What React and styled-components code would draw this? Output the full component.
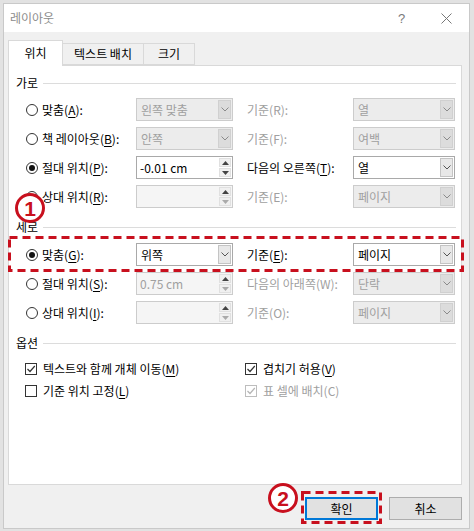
import React from "react";
import styled, { createGlobalStyle } from "styled-components";

const GlobalStyle = createGlobalStyle`
  html, body {
    margin: 0;
    padding: 0;
    background: #e2e2e2;
  }
  body {
    font-family: "Noto Sans CJK KR", "Noto Sans", sans-serif;
    font-size: 12px;
    color: #000;
  }
`;

const RED = "#c8101e";

const Window = styled.div`
  box-sizing: border-box;
  margin: 3px 0 0 3px;
  width: 467px;
  height: 526px;
  background: #f0f0f0;
  border: 1px solid #c9c9c9;
  display: flex;
  flex-direction: column;
`;

const TitleBar = styled.div`
  height: 28px;
  background: #fff;
  display: flex;
  align-items: center;
  padding-left: 6px;
`;

const Title = styled.span`
  flex: 1;
  color: #8c8c8c;
  font-size: 12px;
  line-height: 16px;
`;

const TitleButton = styled.div`
  width: 45px;
  height: 28px;
  display: flex;
  align-items: center;
  justify-content: center;
  color: #7a7a7a;
  font-family: "Liberation Sans", sans-serif;
  font-size: 13px;
`;

const Body = styled.div`
  flex: 1;
  display: flex;
  flex-direction: column;
  padding: 8px 7px 0 4px;
`;

const TabRow = styled.div`
  display: flex;
  align-items: flex-end;
  height: 25px;
  position: relative;
  z-index: 1;
`;

const Tab = styled.div`
  box-sizing: border-box;
  width: ${(p) => p.w}px;
  height: ${(p) => (p.active ? 26 : 22)}px;
  margin-bottom: ${(p) => (p.active ? -1 : 0)}px;
  background: ${(p) => (p.active ? "#fff" : "#f0f0f0")};
  border: 1px solid #d9d9d9;
  border-bottom: ${(p) => (p.active ? "none" : "1px solid #d9d9d9")};
  border-left: ${(p) => (p.first ? "1px solid #d9d9d9" : "none")};
  display: flex;
  align-items: center;
  justify-content: center;
  font-size: 12px;
  line-height: 16px;
  padding-bottom: ${(p) => (p.active ? 2 : 0)}px;
`;

const Panel = styled.div`
  box-sizing: border-box;
  height: 420px;
  background: #fff;
  border: 1px solid #d9d9d9;
  padding: 9px 5px 0 7px;
  display: flex;
  flex-direction: column;
`;

const Heading = styled.div`
  position: relative;
  display: flex;
  align-items: center;
  height: 16px;
  line-height: 16px;
  margin-top: ${(p) => p.top || 0}px;
  margin-bottom: ${(p) => p.gap}px;
`;

const HeadingLine = styled.div`
  flex: 1;
  height: 1px;
  background: #dcdcdc;
  margin-left: 5px;
`;

const Rows = styled.div`
  display: flex;
  flex-direction: column;
  padding-left: 8px;
`;

const Row = styled.div`
  position: relative;
  display: flex;
  align-items: center;
  height: 29px;
`;

const LeftLabel = styled.div`
  width: 112px;
  display: flex;
  align-items: center;
  white-space: nowrap;
  line-height: 16px;
`;

const RightLabel = styled.div`
  box-sizing: border-box;
  width: 120px;
  padding-left: 14px;
  white-space: nowrap;
  line-height: 16px;
  color: ${(p) => (p.disabled ? "#a0a0a0" : "#000")};
`;

const Radio = styled.span`
  box-sizing: border-box;
  width: 12px;
  height: 12px;
  margin: 0 4px 0 2px;
  border-radius: 50%;
  border: 1px solid #333;
  display: flex;
  align-items: center;
  justify-content: center;
  &::after {
    content: "";
    display: ${(p) => (p.checked ? "block" : "none")};
    width: 6px;
    height: 6px;
    border-radius: 50%;
    background: #111;
  }
`;

const Key = styled.u`
  text-underline-offset: 2px;
`;

const Field = styled.div`
  box-sizing: border-box;
  width: ${(p) => p.w}px;
  height: 23px;
  display: flex;
  align-items: stretch;
  border: 1px solid ${(p) => (p.disabled ? "#cccccc" : "#a9a9a9")};
  background: ${(p) => (p.disabled ? (p.spin ? "#f5f5f5" : "#ececec") : "#fff")};
  color: ${(p) => (p.disabled ? "#a0a0a0" : "#000")};
`;

const FieldText = styled.span`
  flex: 1;
  display: flex;
  align-items: center;
  padding-left: ${(p) => (p.spin ? 3 : 4)}px;
  line-height: 16px;
  white-space: nowrap;
`;

const DropButton = styled.div`
  box-sizing: border-box;
  width: 13px;
  margin: 1px;
  border: 1px solid ${(p) => (p.disabled ? "#d0d0d0" : "#c4c4c4")};
  background: ${(p) => (p.disabled ? "#dcdcdc" : "#e8e8e8")};
  display: flex;
  align-items: center;
  justify-content: center;
`;

const SpinColumn = styled.div`
  width: 12px;
  margin: 1px;
  display: flex;
  flex-direction: column;
  gap: 1px;
`;

const SpinButton = styled.div`
  flex: 1;
  background: #f0f0f0;
  border: 1px solid #e0e0e0;
  display: flex;
  align-items: center;
  justify-content: center;
`;

const Highlight = styled.div`
  position: absolute;
  left: ${(p) => p.l}px;
  top: ${(p) => p.t}px;
  width: ${(p) => p.w}px;
  height: ${(p) => p.h}px;
  pointer-events: none;
`;

const Badge = styled.div`
  box-sizing: border-box;
  position: absolute;
  left: ${(p) => p.l}px;
  top: ${(p) => p.t}px;
  width: 30px;
  height: 30px;
  border-radius: 50%;
  border: 3px solid ${RED};
  background: #fff;
  color: ${RED};
  font-family: "Liberation Sans", sans-serif;
  font-weight: 700;
  font-size: 21px;
  line-height: 1;
  display: flex;
  align-items: center;
  justify-content: center;
  z-index: 2;
`;

const CheckGrid = styled.div`
  display: grid;
  grid-template-columns: 220px 1fr;
  grid-auto-rows: 22px;
  padding-left: 8px;
`;

const CheckItem = styled.div`
  display: flex;
  align-items: center;
  line-height: 16px;
  white-space: nowrap;
  color: ${(p) => (p.disabled ? "#a0a0a0" : "#000")};
`;

const Box = styled.span`
  box-sizing: border-box;
  width: 12px;
  height: 12px;
  margin: 0 6px 0 1px;
  border: 1px solid ${(p) => (p.disabled ? "#bdbdbd" : "#333")};
  display: flex;
  align-items: center;
  justify-content: center;
`;

const Footer = styled.div`
  display: flex;
  justify-content: flex-end;
  gap: 11px;
  padding-top: 12px;
`;

const ButtonWrap = styled.div`
  position: relative;
`;

const Button = styled.div`
  box-sizing: border-box;
  width: 73px;
  height: 23px;
  background: #e1e1e1;
  border: ${(p) => (p.primary ? "2px solid #0078d7" : "1px solid #adadad")};
  display: flex;
  align-items: center;
  justify-content: center;
  font-size: 12px;
  line-height: 16px;
`;

const Chevron = ({ color }) => (
  <svg width="8" height="5" viewBox="0 0 8 5">
    <polyline points="0.5,0.5 4,4 7.5,0.5" fill="none" stroke={color} strokeWidth="1" />
  </svg>
);

const Tri = ({ up, color }) => (
  <svg width="7" height="4" viewBox="0 0 7 4">
    <polygon points={up ? "3.5,0 7,4 0,4" : "0,0 7,0 3.5,4"} fill={color} />
  </svg>
);

const Tick = ({ color }) => (
  <svg width="10" height="10" viewBox="0 0 10 10">
    <polyline points="1.5,5 4,7.5 8.8,2" fill="none" stroke={color} strokeWidth="1.2" />
  </svg>
);

const Dashed = ({ w, h }) => (
  <svg width={w} height={h} viewBox={`0 0 ${w} ${h}`}>
    <rect
      x="1.5"
      y="1.5"
      width={w - 3}
      height={h - 3}
      fill="none"
      stroke={RED}
      strokeWidth="3"
      strokeDasharray="8 5"
    />
  </svg>
);

function Combo({ w, value, disabled }) {
  return (
    <Field w={w} disabled={disabled}>
      <FieldText>{value}</FieldText>
      <DropButton disabled={disabled}>
        <Chevron color={disabled ? "#8a8a8a" : "#555"} />
      </DropButton>
    </Field>
  );
}

function Spin({ w, value, disabled }) {
  return (
    <Field w={w} disabled={disabled} spin>
      <FieldText spin>{value}</FieldText>
      <SpinColumn>
        <SpinButton>
          <Tri up color="#444" />
        </SpinButton>
        <SpinButton>
          <Tri color={disabled ? "#aaa" : "#444"} />
        </SpinButton>
      </SpinColumn>
    </Field>
  );
}

function Label({ text, k, tail = ":" }) {
  return (
    <span>
      {text}(<Key>{k}</Key>){tail}
    </span>
  );
}

function PlainLabel({ text, k, under }) {
  return (
    <>
      {text}(
      {under ? <Key>{k}</Key> : k}
      ):
    </>
  );
}

const horizontal = [
  { label: "맞춤", k: "A", left: { type: "combo", value: "왼쪽 맞춤", disabled: true }, rt: "기준", rk: "R", rd: true, right: "열", rightDisabled: true },
  { label: "책 레이아웃", k: "B", left: { type: "combo", value: "안쪽", disabled: true }, rt: "기준", rk: "F", rd: true, right: "여백", rightDisabled: true },
  { label: "절대 위치", k: "P", checked: true, left: { type: "spin", value: "-0.01 cm" }, rt: "다음의 오른쪽", rk: "T", right: "열" },
  { label: "상대 위치", k: "R", left: { type: "spin", value: "", disabled: true }, rt: "기준", rk: "E", rd: true, right: "페이지", rightDisabled: true },
];

const vertical = [
  { label: "맞춤", k: "G", checked: true, left: { type: "combo", value: "위쪽" }, rt: "기준", rk: "E", right: "페이지", highlight: true },
  { label: "절대 위치", k: "S", left: { type: "spin", value: "0.75 cm", disabled: true }, rt: "다음의 아래쪽", rk: "W", rd: true, right: "단락", rightDisabled: true },
  { label: "상대 위치", k: "I", left: { type: "spin", value: "", disabled: true }, rt: "기준", rk: "O", rd: true, right: "페이지", rightDisabled: true },
];

function PositionRow({ row }) {
  const { left } = row;
  return (
    <Row>
      <LeftLabel>
        <Radio checked={row.checked} />
        <Label text={row.label} k={row.k} />
      </LeftLabel>
      {left.type === "combo" ? (
        <Combo w={97} value={left.value} disabled={left.disabled} />
      ) : (
        <Spin w={97} value={left.value} disabled={left.disabled} />
      )}
      <RightLabel disabled={row.rd}>
        <PlainLabel text={row.rt} k={row.rk} under={!row.rd} />
      </RightLabel>
      <Combo w={102} value={row.right} disabled={row.rightDisabled} />
      {row.highlight && (
        <Highlight l={-16} t={-4} w={456} h={36}>
          <Dashed w={456} h={36} />
        </Highlight>
      )}
    </Row>
  );
}

export default function App() {
  return (
    <>
      <GlobalStyle />
      <Window>
        <TitleBar>
          <Title>레이아웃</Title>
          <TitleButton>?</TitleButton>
          <TitleButton>
            <svg width="11" height="11" viewBox="0 0 11 11">
              <path d="M0.5 0.5 L10.5 10.5 M10.5 0.5 L0.5 10.5" stroke="#777" strokeWidth="1" />
            </svg>
          </TitleButton>
        </TitleBar>
        <Body>
          <TabRow>
            <Tab w={55} active first>
              위치
            </Tab>
            <Tab w={81}>텍스트 배치</Tab>
            <Tab w={51}>크기</Tab>
          </TabRow>
          <Panel>
            <Heading gap={4}>
              가로
              <HeadingLine />
            </Heading>
            <Rows>
              {horizontal.map((r) => (
                <PositionRow key={r.k} row={r} />
              ))}
            </Rows>

            <Heading top={8} gap={5}>
              세로
              <HeadingLine />
              <Badge l={-1} t={-26}>1</Badge>
            </Heading>
            <Rows>
              {vertical.map((r) => (
                <PositionRow key={r.k} row={r} />
              ))}
            </Rows>

            <Heading top={8} gap={7}>
              옵션
              <HeadingLine />
            </Heading>
            <CheckGrid>
              <CheckItem>
                <Box>
                  <Tick color="#333" />
                </Box>
                <Label text="텍스트와 함께 개체 이동" k="M" tail="" />
              </CheckItem>
              <CheckItem>
                <Box>
                  <Tick color="#333" />
                </Box>
                <Label text="겹치기 허용" k="V" tail="" />
              </CheckItem>
              <CheckItem>
                <Box />
                <Label text="기준 위치 고정" k="L" tail="" />
              </CheckItem>
              <CheckItem disabled>
                <Box disabled>
                  <Tick color="#b5b5b5" />
                </Box>
                표 셀에 배치(C)
              </CheckItem>
            </CheckGrid>
          </Panel>
          <Footer>
            <ButtonWrap>
              <Button primary>확인</Button>
              <Highlight l={-4} t={-6} w={81} h={33}>
                <Dashed w={81} h={33} />
              </Highlight>
              <Badge l={-37} t={-14}>2</Badge>
            </ButtonWrap>
            <Button>취소</Button>
          </Footer>
        </Body>
      </Window>
    </>
  );
}
